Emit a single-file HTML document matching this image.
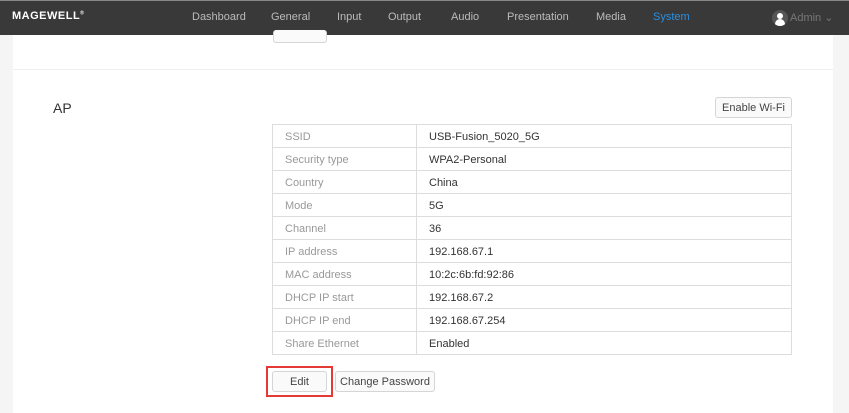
<!DOCTYPE html><html><head><style>
body{margin:0;width:849px;height:413px;overflow:hidden;background:#f5f5f5;font-family:"Liberation Sans",sans-serif;position:relative}
.nav{position:absolute;left:0;top:0;width:849px;height:35px;background:#393939;border-top:1px solid #888;box-sizing:border-box}
.nav span{position:absolute;top:10px;font-size:11px;color:#bbb;white-space:nowrap}
.card{position:absolute;left:13px;top:35px;width:820px;height:378px;background:#fff}
.hr{position:absolute;left:13px;top:69px;width:820px;height:1px;background:#eee}
.btn{position:absolute;border:1px solid #d5d5d5;border-radius:3px;background:#fafafa;font-size:11px;color:#444;box-sizing:border-box;white-space:nowrap;display:flex;align-items:center;justify-content:center}
table{position:absolute;left:272px;top:124px;width:520px;border-collapse:collapse;font-size:11px;table-layout:fixed}
td{border:1px solid #ddd;height:21px;padding:1px 0 0 12px;color:#333;white-space:nowrap;box-sizing:border-box}
tr{height:23px}
td:first-child{width:144px;color:#999}
</style></head><body>
<div class="nav">
<span style="left:12px;top:9px;color:#fff;font-weight:bold;font-size:11px;letter-spacing:0.5px">MAGEWELL<sup style="font-size:5px">®</sup></span>
<span style="left:192px">Dashboard</span><span style="left:271px">General</span><span style="left:337px">Input</span><span style="left:388px">Output</span><span style="left:451px">Audio</span><span style="left:507px">Presentation</span><span style="left:596px">Media</span><span style="left:653px;color:#2a8fe0">System</span>
<span style="left:772px;top:9px;width:16px;height:16px;border-radius:50%;background:#555;overflow:hidden"><i style="position:absolute;left:5px;top:3px;width:6px;height:6px;border-radius:50%;background:#fff"></i><i style="position:absolute;left:3px;top:9px;width:10px;height:9px;border-radius:5px 5px 0 0;background:#fff"></i></span>
<span style="left:790px;color:#777">Admin ⌄</span>
</div>
<div class="card"></div>
<div class="btn" style="left:273px;top:30px;width:54px;height:13px;border-top:none"></div>
<div class="hr"></div>
<div style="position:absolute;left:53px;top:100px;font-size:14px;color:#333">AP</div>
<div class="btn" style="left:715px;top:97px;width:77px;height:21px">Enable Wi-Fi</div>
<table>
<tr><td>SSID</td><td>USB-Fusion_5020_5G</td></tr>
<tr><td>Security type</td><td>WPA2-Personal</td></tr>
<tr><td>Country</td><td>China</td></tr>
<tr><td>Mode</td><td>5G</td></tr>
<tr><td>Channel</td><td>36</td></tr>
<tr><td>IP address</td><td>192.168.67.1</td></tr>
<tr><td>MAC address</td><td>10:2c:6b:fd:92:86</td></tr>
<tr><td>DHCP IP start</td><td>192.168.67.2</td></tr>
<tr><td>DHCP IP end</td><td>192.168.67.254</td></tr>
<tr><td>Share Ethernet</td><td>Enabled</td></tr>
</table>
<div style="position:absolute;left:266px;top:366px;width:67px;height:31px;border:2px solid #e53935;box-sizing:border-box"></div>
<div class="btn" style="left:272px;top:371px;width:55px;height:21px">Edit</div>
<div class="btn" style="left:335px;top:371px;width:100px;height:21px">Change Password</div>
</body></html>
